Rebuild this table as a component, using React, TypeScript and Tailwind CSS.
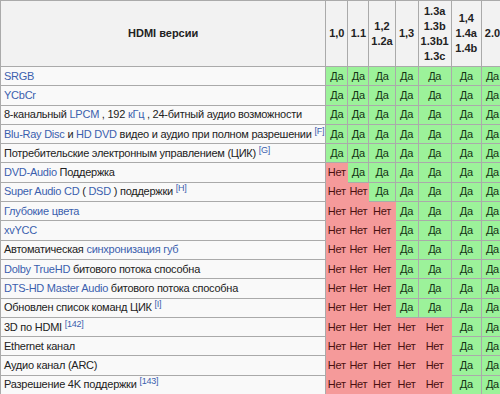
import React from "react";

type Part = string | { link: string } | { sup: string };

const VERSIONS: string[][] = [
  ["1,0"],
  ["1.1"],
  ["1,2", "1.2a"],
  ["1,3"],
  ["1.3a", "1.3b", "1.3b1", "1.3c"],
  ["1,4", "1.4a", "1.4b"],
  ["2.0"],
];

const WIDTHS = ["w-[22px]", "w-[21px]", "w-[26px]", "w-[23px]", "w-[33px]", "w-[30px]", "w-[22px]"];

// number of "Нет" cells from the left in each row
const ROWS: { label: Part[]; no: number }[] = [
  { label: [{ link: "SRGB" }], no: 0 },
  { label: [{ link: "YCbCr" }], no: 0 },
  { label: ["8-канальный ", { link: "LPCM" }, " , 192 ", { link: "кГц" }, " , 24-битный аудио возможности"], no: 0 },
  { label: [{ link: "Blu-Ray Disc" }, " и ", { link: "HD DVD" }, " видео и аудио при полном разрешении ", { sup: "[F]" }], no: 0 },
  { label: ["Потребительские электронным управлением (ЦИК) ", { sup: "[G]" }], no: 0 },
  { label: [{ link: "DVD-Audio" }, " Поддержка"], no: 1 },
  { label: [{ link: "Super Audio CD" }, " ( ", { link: "DSD" }, " ) поддержки ", { sup: "[H]" }], no: 2 },
  { label: [{ link: "Глубокие цвета" }], no: 3 },
  { label: [{ link: "xvYCC" }], no: 3 },
  { label: ["Автоматическая ", { link: "синхронизация губ" }], no: 3 },
  { label: [{ link: "Dolby TrueHD" }, " битового потока способна"], no: 3 },
  { label: [{ link: "DTS-HD Master Audio" }, " битового потока способна"], no: 3 },
  { label: ["Обновлен список команд ЦИК ", { sup: "[I]" }], no: 3 },
  { label: ["3D по HDMI ", { sup: "[142]" }], no: 5 },
  { label: ["Ethernet канал"], no: 5 },
  { label: ["Аудио канал (ARC)"], no: 5 },
  { label: ["Разрешение 4K поддержки ", { sup: "[143]" }], no: 5 },
];

function Label({ parts }: { parts: Part[] }) {
  return (
    <>
      {parts.map((p, i) => {
        if (typeof p === "string") return <span key={i}>{p}</span>;
        if ("link" in p) return <span key={i} className="text-[#3b5fae]">{p.link}</span>;
        return (
          <span key={i} className="text-[9px] text-[#3b5fae] align-top relative -top-[3px]">
            {p.sup}
          </span>
        );
      })}
    </>
  );
}

export default function App() {
  return (
    <div
      className="w-[500px] h-[394px] overflow-hidden bg-white text-[#222]"
      style={{ fontFamily: "'Liberation Sans', Arial, sans-serif" }}
    >
      <table className="table-fixed border-collapse w-[504px] text-[11px] tracking-[-0.25px]">
        <colgroup>
          <col className="w-[324px]" />
          {WIDTHS.map((w, i) => (
            <col key={i} className={w} />
          ))}
        </colgroup>
        <thead>
          <tr>
            <th className="h-[66px] border border-[#aaa] bg-[#f2f2f2] font-bold text-center align-middle tracking-normal">
              HDMI версии
            </th>
            {VERSIONS.map((v, i) => (
              <th
                key={i}
                className="border border-[#aaa] bg-[#f2f2f2] font-bold text-center align-middle leading-[15px] px-0 tracking-normal"
              >
                {v.map((line) => (
                  <div key={line}>{line}</div>
                ))}
              </th>
            ))}
          </tr>
        </thead>
        <tbody>
          {ROWS.map((row, r) => (
            <tr key={r}>
              <td className="h-[19.3px] border border-[#aaa] bg-[#f9f9f9] px-[3px] py-0 whitespace-nowrap leading-[17px]">
                <Label parts={row.label} />
              </td>
              {VERSIONS.map((_, c) => {
                const no = c < row.no;
                return (
                  <td
                    key={c}
                    className={`border text-center px-0 py-0 whitespace-nowrap leading-[17px] ${
                      no ? "bg-[#f59a9a] border-[#f59a9a] text-[#4a1010]" : "bg-[#9cf29a] border-[#aaa] text-[#143314]"
                    }`}
                  >
                    {no ? "Нет" : "Да"}
                  </td>
                );
              })}
            </tr>
          ))}
        </tbody>
      </table>
    </div>
  );
}
